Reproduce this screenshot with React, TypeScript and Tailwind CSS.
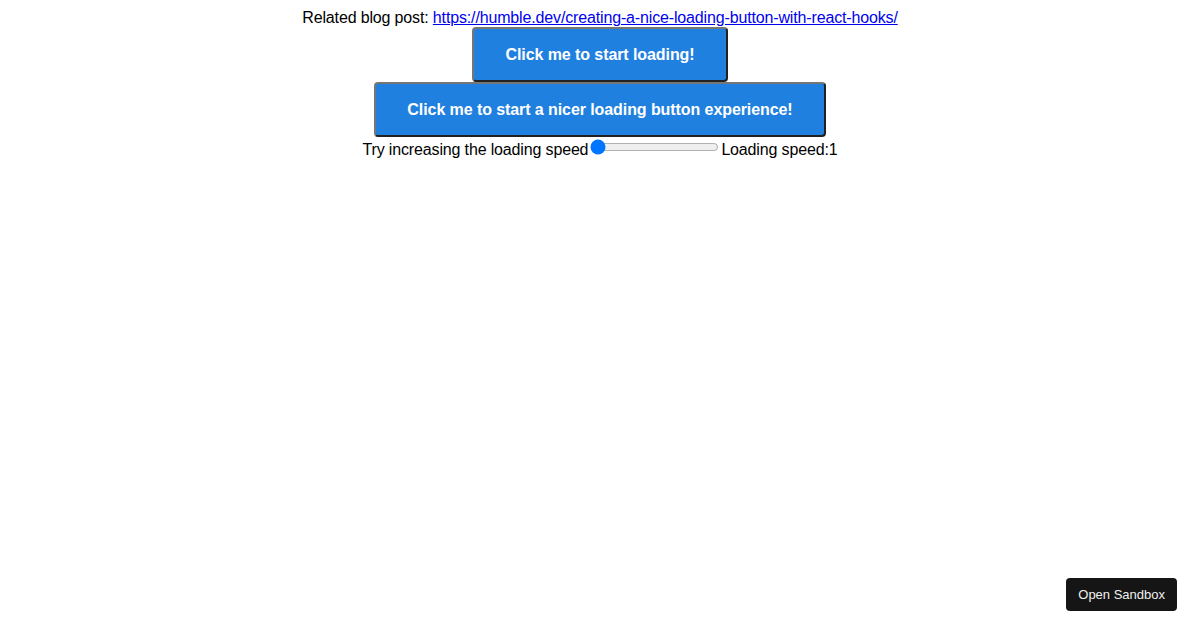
import { useState } from "react"

export default function App() {
  const [speed, setSpeed] = useState(1)

  return (
    <div className="min-h-[630px] bg-white p-2 text-center font-['Liberation_Sans',Arial,sans-serif] text-base leading-[19px] text-black">
      <div className="tracking-[-0.15px]">
        Related blog post:{" "}
        <a className="text-[#0000ee] underline" href="#">
          https://humble.dev/creating-a-nice-loading-button-with-react-hooks/
        </a>
      </div>
      <button className="mx-auto block rounded-[4px] border-2 bg-[#2080e0] px-[31px] py-4 font-bold tracking-[-0.08px] text-white [border-style:outset] [border-color:#767676]">
        Click me to start loading!
      </button>
      <button className="mx-auto block rounded-[4px] border-2 bg-[#2080e0] px-[31px] py-4 font-bold tracking-[-0.08px] text-white [border-style:outset] [border-color:#767676]">
        Click me to start a nicer loading button experience!
      </button>
      <div className="tracking-[-0.15px]">
        Try increasing the loading speed
        <input
          type="range"
          min={1}
          max={10}
          value={speed}
          onChange={(e) => setSpeed(Number(e.target.value))}
          className="m-0.5 w-[129px]"
        />
        Loading speed:{speed}
      </div>

      <button className="fixed right-[23px] bottom-[19px] rounded-[4px] bg-[#151515] px-[12px] py-[9px] font-['Liberation_Sans',Arial,sans-serif] text-[13px] leading-[15px] text-[#f0f0f0]">
        Open Sandbox
      </button>
    </div>
  )
}
